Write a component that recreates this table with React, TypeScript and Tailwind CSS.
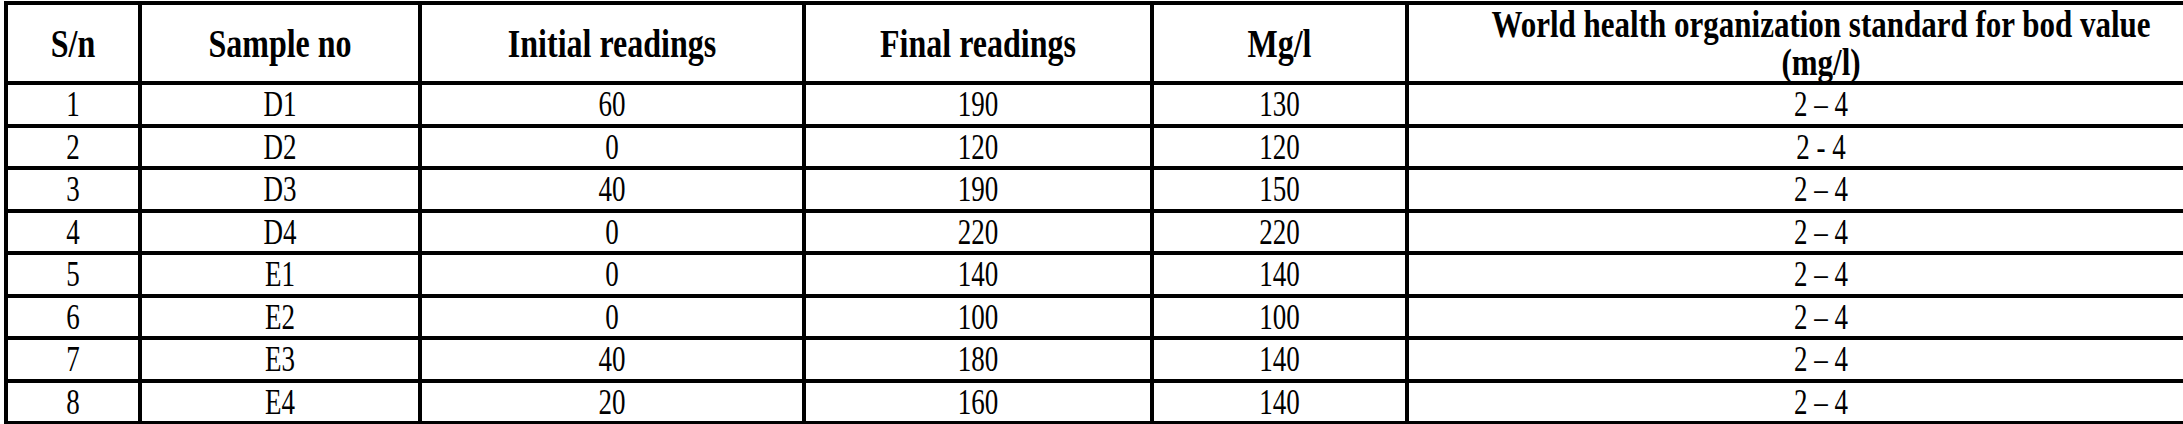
const rows = [
  ['1', 'D1', '60', '190', '130', '2 – 4'],
  ['2', 'D2', '0', '120', '120', '2 - 4'],
  ['3', 'D3', '40', '190', '150', '2 – 4'],
  ['4', 'D4', '0', '220', '220', '2 – 4'],
  ['5', 'E1', '0', '140', '140', '2 – 4'],
  ['6', 'E2', '0', '100', '100', '2 – 4'],
  ['7', 'E3', '40', '180', '140', '2 – 4'],
  ['8', 'E4', '20', '160', '140', '2 – 4'],
];

const headers = ['S/n', 'Sample no', 'Initial readings', 'Final readings', 'Mg/l'];

const App = () => {
  return (
    <div className="w-[2183px] h-[424px] overflow-hidden bg-white pt-[1px] pl-[4px] font-['Liberation_Serif','Times_New_Roman',serif] text-black">
      {/* BOD results table, cut off at the right edge like the scan */}
      <div className="grid w-max bg-black gap-[4px] p-[4px] grid-cols-[130px_276px_380px_344px_251px_824px] grid-rows-[76px_39px_38px_39px_38px_39px_38px_39px_38px]">
        {headers.map((h) => (
          <div key={h} className="bg-white flex items-center justify-center text-center">
            <span className="inline-block text-[32px] font-bold leading-none scale-y-[1.25]">{h}</span>
          </div>
        ))}
        <div className="bg-white flex flex-col items-center justify-center gap-[7px] text-center text-[31px] font-bold leading-none">
          <span className="inline-block scale-y-[1.2]">World health organization standard for bod value</span>
          <span className="inline-block scale-y-[1.2]">(mg/l)</span>
        </div>

        {rows.map((row, i) =>
          row.map((cell, j) => (
            <div key={`${i}-${j}`} className="bg-white flex items-center justify-center text-center">
              <span className="inline-block text-[27px] leading-none scale-y-[1.32]">{cell}</span>
            </div>
          ))
        )}
      </div>
    </div>
  );
};

export default App;
